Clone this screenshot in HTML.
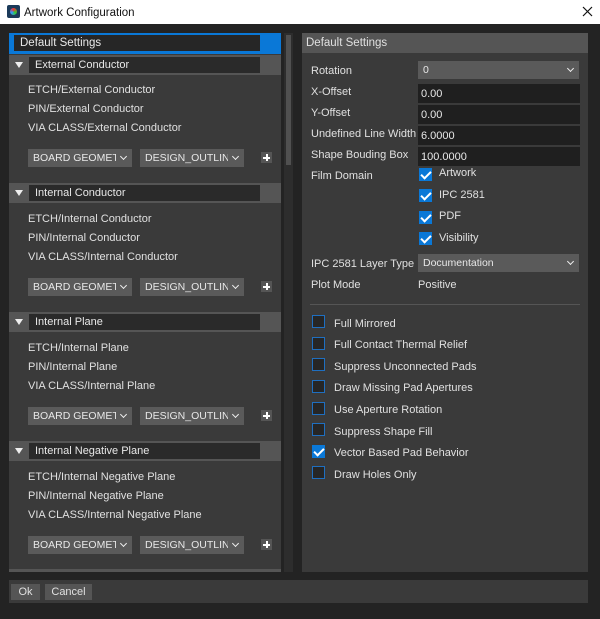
<!DOCTYPE html>
<html><head><style>
*{margin:0;padding:0;box-sizing:border-box}
body{width:600px;height:619px;background:#232323;font-family:"Liberation Sans",sans-serif;font-size:11px;color:#e0e0e0;position:relative;overflow:hidden}
.a{position:absolute}
.lbl{position:absolute;white-space:nowrap;line-height:14px;margin-top:1px}
.sel{position:absolute;background:#5a5a5a;color:#e8e8e8;padding-left:5px;line-height:19px;height:18px;font-size:10.5px;white-space:nowrap;overflow:hidden}
.sel span{display:block;overflow:hidden;margin-right:16px}
.sel::after{content:"";position:absolute;right:6px;top:5px;width:4px;height:4px;border-right:1.5px solid #eee;border-bottom:1.5px solid #eee;transform:rotate(45deg)}
.inp{position:absolute;background:#1f1f1f;height:19px;line-height:21px;padding-left:3px;color:#e8e8e8}
.cb{position:absolute;width:13px;height:13px;border:1px solid #1f6fc0;background:#262626}
.cb.on{background:#0a78d7;border-color:#0a78d7}
.cb.on::after{content:"";position:absolute;left:3px;top:0px;width:4px;height:8px;border-right:2px solid #fff;border-bottom:2px solid #fff;transform:rotate(45deg)}
.hdr{position:absolute;left:9px;width:272px;height:20px;background:#555}
.tri{position:absolute;left:6px;top:7px;width:0;height:0;border-left:4px solid transparent;border-right:4px solid transparent;border-top:6px solid #eee}
.hin{position:absolute;left:20px;top:2px;width:231px;height:16px;background:#2a2a2a;padding-left:6px;line-height:17px;color:#e8e8e8}
.plus{position:absolute;width:11px;height:11px;background:#555}
.plus::before{content:"";position:absolute;left:2px;top:4.5px;width:7px;height:2px;background:#fff}
.plus::after{content:"";position:absolute;left:4.5px;top:2px;width:2px;height:7px;background:#fff}
</style></head><body>
<div class="a" style="left:0;top:0;width:600px;height:24px;background:#fff"></div>
<div class="a" style="left:7px;top:5px;width:13px;height:13px;background:#1b3a5a;border-radius:2px"><div style="position:absolute;left:3px;top:3px;width:7px;height:7px;border-radius:50%;background:conic-gradient(#e33,#3c3,#39f,#e33)"></div></div>
<div class="lbl" style="left:24px;top:5px;color:#111;font-size:11.5px">Artwork Configuration</div>
<svg class="a" style="left:582px;top:6px" width="11" height="11"><path d="M1 1L10 10M10 1L1 10" stroke="#111" stroke-width="1.2"/></svg>

<div class="a" style="left:9px;top:33px;width:272px;height:539px;background:#3a3a3a"></div>
<div class="a" style="left:284px;top:33px;width:9px;height:539px;background:#2d2d2d"></div>
<div class="a" style="left:286px;top:35px;width:5px;height:130px;background:#505050"></div>
<div class="a" style="left:9px;top:33px;width:272px;height:21px;background:#0a78d7"></div>
<div class="a" style="left:14px;top:35px;width:246px;height:16px;background:#262626;padding-left:6px;line-height:17px;color:#e8e8e8;font-size:11.5px">Default Settings</div>

<div class="hdr" style="top:55px"><div class="tri"></div><div class="hin">External Conductor</div></div>
<div class="lbl" style="left:28px;top:82px">ETCH/External Conductor</div>
<div class="lbl" style="left:28px;top:101px">PIN/External Conductor</div>
<div class="lbl" style="left:28px;top:120px">VIA CLASS/External Conductor</div>
<div class="sel" style="left:28px;top:149px;width:104px"><span>BOARD GEOMETRY</span></div>
<div class="sel" style="left:140px;top:149px;width:104px"><span>DESIGN_OUTLINE</span></div>
<div class="plus" style="left:261px;top:152px"></div>

<div class="hdr" style="top:183px"><div class="tri"></div><div class="hin">Internal Conductor</div></div>
<div class="lbl" style="left:28px;top:211px">ETCH/Internal Conductor</div>
<div class="lbl" style="left:28px;top:230px">PIN/Internal Conductor</div>
<div class="lbl" style="left:28px;top:249px">VIA CLASS/Internal Conductor</div>
<div class="sel" style="left:28px;top:278px;width:104px"><span>BOARD GEOMETRY</span></div>
<div class="sel" style="left:140px;top:278px;width:104px"><span>DESIGN_OUTLINE</span></div>
<div class="plus" style="left:261px;top:281px"></div>

<div class="hdr" style="top:312px"><div class="tri"></div><div class="hin">Internal Plane</div></div>
<div class="lbl" style="left:28px;top:340px">ETCH/Internal Plane</div>
<div class="lbl" style="left:28px;top:359px">PIN/Internal Plane</div>
<div class="lbl" style="left:28px;top:378px">VIA CLASS/Internal Plane</div>
<div class="sel" style="left:28px;top:407px;width:104px"><span>BOARD GEOMETRY</span></div>
<div class="sel" style="left:140px;top:407px;width:104px"><span>DESIGN_OUTLINE</span></div>
<div class="plus" style="left:261px;top:410px"></div>

<div class="hdr" style="top:441px"><div class="tri"></div><div class="hin">Internal Negative Plane</div></div>
<div class="lbl" style="left:28px;top:469px">ETCH/Internal Negative Plane</div>
<div class="lbl" style="left:28px;top:488px">PIN/Internal Negative Plane</div>
<div class="lbl" style="left:28px;top:507px">VIA CLASS/Internal Negative Plane</div>
<div class="sel" style="left:28px;top:536px;width:104px"><span>BOARD GEOMETRY</span></div>
<div class="sel" style="left:140px;top:536px;width:104px"><span>DESIGN_OUTLINE</span></div>
<div class="plus" style="left:261px;top:539px"></div>
<div class="a" style="left:9px;top:569px;width:272px;height:3px;background:#555"></div>

<div class="a" style="left:302px;top:33px;width:286px;height:539px;background:#3a3a3a"></div>
<div class="a" style="left:302px;top:33px;width:286px;height:20px;background:#555;padding-left:4px;line-height:21px;font-size:11.5px">Default Settings</div>
<div class="lbl" style="left:311px;top:63px">Rotation</div>
<div class="sel" style="left:418px;top:61px;width:161px"><span>0</span></div>
<div class="lbl" style="left:311px;top:84px">X-Offset</div><div class="inp" style="left:418px;top:84px;width:162px">0.00</div>
<div class="lbl" style="left:311px;top:105px">Y-Offset</div><div class="inp" style="left:418px;top:105px;width:162px">0.00</div>
<div class="lbl" style="left:311px;top:126px">Undefined Line Width</div><div class="inp" style="left:418px;top:126px;width:162px">6.0000</div>
<div class="lbl" style="left:311px;top:147px">Shape Bouding Box</div><div class="inp" style="left:418px;top:147px;width:162px">100.0000</div>
<div class="lbl" style="left:311px;top:168px">Film Domain</div>
<div class="cb on" style="left:419px;top:168px"></div><div class="lbl" style="left:439px;top:165px">Artwork</div>
<div class="cb on" style="left:419px;top:189px"></div><div class="lbl" style="left:439px;top:187px">IPC 2581</div>
<div class="cb on" style="left:419px;top:211px"></div><div class="lbl" style="left:439px;top:208px">PDF</div>
<div class="cb on" style="left:419px;top:232px"></div><div class="lbl" style="left:439px;top:230px">Visibility</div>
<div class="lbl" style="left:311px;top:256px">IPC 2581 Layer Type</div>
<div class="sel" style="left:418px;top:254px;width:161px"><span>Documentation</span></div>
<div class="lbl" style="left:311px;top:277px">Plot Mode</div>
<div class="lbl" style="left:418px;top:277px">Positive</div>
<div class="a" style="left:310px;top:304px;width:270px;height:1px;background:#555"></div>
<div class="cb" style="left:312px;top:315px"></div><div class="lbl" style="left:334px;top:316px">Full Mirrored</div>
<div class="cb" style="left:312px;top:337px"></div><div class="lbl" style="left:334px;top:337px">Full Contact Thermal Relief</div>
<div class="cb" style="left:312px;top:358px"></div><div class="lbl" style="left:334px;top:359px">Suppress Unconnected Pads</div>
<div class="cb" style="left:312px;top:380px"></div><div class="lbl" style="left:334px;top:380px">Draw Missing Pad Apertures</div>
<div class="cb" style="left:312px;top:402px"></div><div class="lbl" style="left:334px;top:402px">Use Aperture Rotation</div>
<div class="cb" style="left:312px;top:423px"></div><div class="lbl" style="left:334px;top:424px">Suppress Shape Fill</div>
<div class="cb on" style="left:312px;top:445px"></div><div class="lbl" style="left:334px;top:445px">Vector Based Pad Behavior</div>
<div class="cb" style="left:312px;top:466px"></div><div class="lbl" style="left:334px;top:467px">Draw Holes Only</div>

<div class="a" style="left:9px;top:580px;width:579px;height:23px;background:#3a3a3a"></div>
<div class="a" style="left:11px;top:584px;width:29px;height:16px;background:#555;text-align:center;line-height:17px">Ok</div>
<div class="a" style="left:45px;top:584px;width:47px;height:16px;background:#555;text-align:center;line-height:17px">Cancel</div>
</body></html>
